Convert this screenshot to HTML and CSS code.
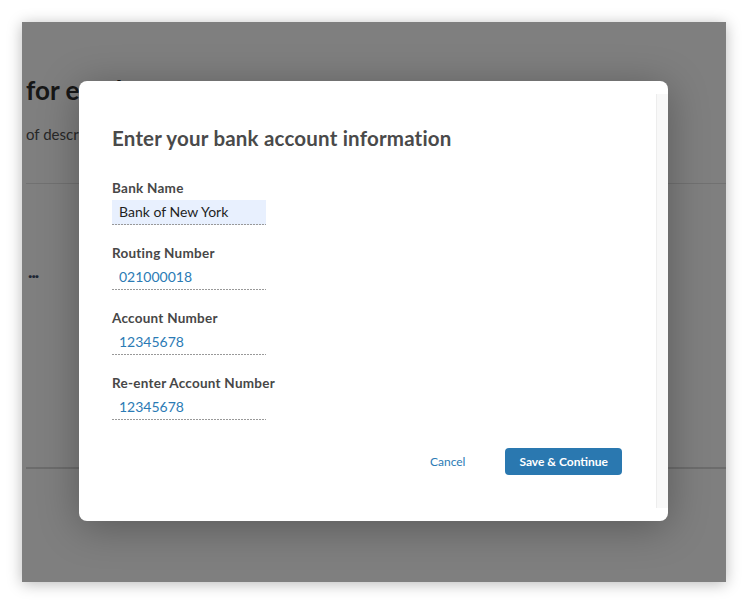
FILE: index.html
```html
<!DOCTYPE html>
<html lang="en">
<head>
<meta charset="utf-8">
<title>Bank account</title>
<link rel="stylesheet" href="styles.css">
</head>
<body>
<div class="frame">
  <div class="page">
    <div class="page-header">
      <h1 class="page-title">for employees</h1>
      <p class="page-desc">of description</p>
    </div>
    <div class="page-row"><span class="more">&middot;&middot;&middot;</span></div>
    <div class="page-divider"></div>
  </div>
  <div class="overlay"></div>
  <div class="modal">
    <div class="modal-body">
      <h2 class="modal-title">Enter your bank account information</h2>
      <form class="form">
        <div class="field">
          <label class="label" for="bank">Bank Name</label>
          <input class="input input-autofill" id="bank" value="Bank of New York">
        </div>
        <div class="field">
          <label class="label" for="routing">Routing Number</label>
          <input class="input input-num" id="routing" value="021000018">
        </div>
        <div class="field">
          <label class="label" for="account">Account Number</label>
          <input class="input input-num" id="account" value="12345678">
        </div>
        <div class="field">
          <label class="label" for="account2">Re-enter Account Number</label>
          <input class="input input-num" id="account2" value="12345678">
        </div>
        <div class="actions">
          <button type="button" class="btn-link">Cancel</button>
          <button type="button" class="btn-primary">Save &amp; Continue</button>
        </div>
      </form>
    </div>
    <div class="scroll-track"></div>
  </div>
</div>
</body>
</html>
```
FILE: styles.css
```css
* { box-sizing: border-box; }
html, body { margin: 0; padding: 0; background: #fff; }
body {
  font-family: "Lato", "Noto Sans", sans-serif;
  width: 748px;
  height: 604px;
  overflow: hidden;
}
.frame {
  position: relative;
  margin: 22px;
  width: 704px;
  height: 560px;
  overflow: hidden;
  background: #fff;
  box-shadow: 0 2px 14px rgba(0, 0, 0, 0.28);
}
.page { padding-left: 4px; }
.page-header {
  padding-top: 52px;
  padding-bottom: 38px;
  border-bottom: 1px solid #e2e2e2;
}
.page-title {
  margin: 0;
  font-size: 26px;
  line-height: 32px;
  font-weight: 700;
  color: #2e2e2e;
  white-space: nowrap;
}
.page-desc {
  margin: 18px 0 0;
  font-size: 15px;
  line-height: 21px;
  color: #505050;
  white-space: nowrap;
}
.page-row {
  padding: 81px 0 0 2px;
  height: 101px;
}
.more {
  font-size: 16px;
  line-height: 20px;
  font-weight: 700;
  color: #3c4c68;
  letter-spacing: -1px;
}
.page-divider {
  margin-top: 182px;
  border-top: 2px solid #d8d8d8;
}
.overlay {
  position: absolute;
  inset: 0;
  background: rgba(0, 0, 0, 0.5);
}
.modal {
  position: absolute;
  left: 57px;
  top: 59px;
  width: 589px;
  height: 440px;
  background: #fff;
  border-radius: 8px;
  box-shadow: 0 6px 40px rgba(0, 0, 0, 0.3);
  display: flex;
}
.modal-body {
  flex: 1;
  padding: 45px 34px 0 33px;
}
.scroll-track {
  width: 12px;
  margin: 13px 0;
  background: #f8f8f8;
  border-left: 1px solid #ededed;
}
.modal-title {
  margin: 0;
  font-size: 20.5px;
  line-height: 24px;
  font-weight: 700;
  letter-spacing: 0.2px;
  color: #4a4a4a;
}
.form {
  margin-top: 30px;
  display: flex;
  flex-direction: column;
  gap: 20px;
}
.field {
  display: flex;
  flex-direction: column;
  gap: 4px;
}
.label {
  font-size: 13.5px;
  line-height: 16px;
  font-weight: 700;
  letter-spacing: 0.25px;
  color: #474747;
}
.input {
  width: 154px;
  height: 25px;
  padding: 0 7px 3px;
  border: none;
  outline: none;
  font-family: inherit;
  font-size: 14px;
  background-color: transparent;
  background-image: linear-gradient(to right, #999 60%, transparent 60%);
  background-size: 3px 1px;
  background-repeat: repeat-x;
  background-position: left bottom;
}
.input-autofill {
  background-color: #e8f0fe;
  color: #1f1f1f;
}
.input-num { color: #2b7bb5; }
.actions {
  margin-top: 8px;
  display: flex;
  justify-content: flex-end;
  align-items: center;
  gap: 40px;
}
.btn-link {
  border: none;
  background: none;
  padding: 0;
  font-family: inherit;
  font-size: 12px;
  color: #2b7bb5;
  cursor: pointer;
}
.btn-primary {
  height: 27px;
  padding: 0 14px;
  border: none;
  border-radius: 4px;
  background: #2a78b0;
  color: #fff;
  font-family: inherit;
  font-size: 12px;
  font-weight: 700;
  cursor: pointer;
}
```
